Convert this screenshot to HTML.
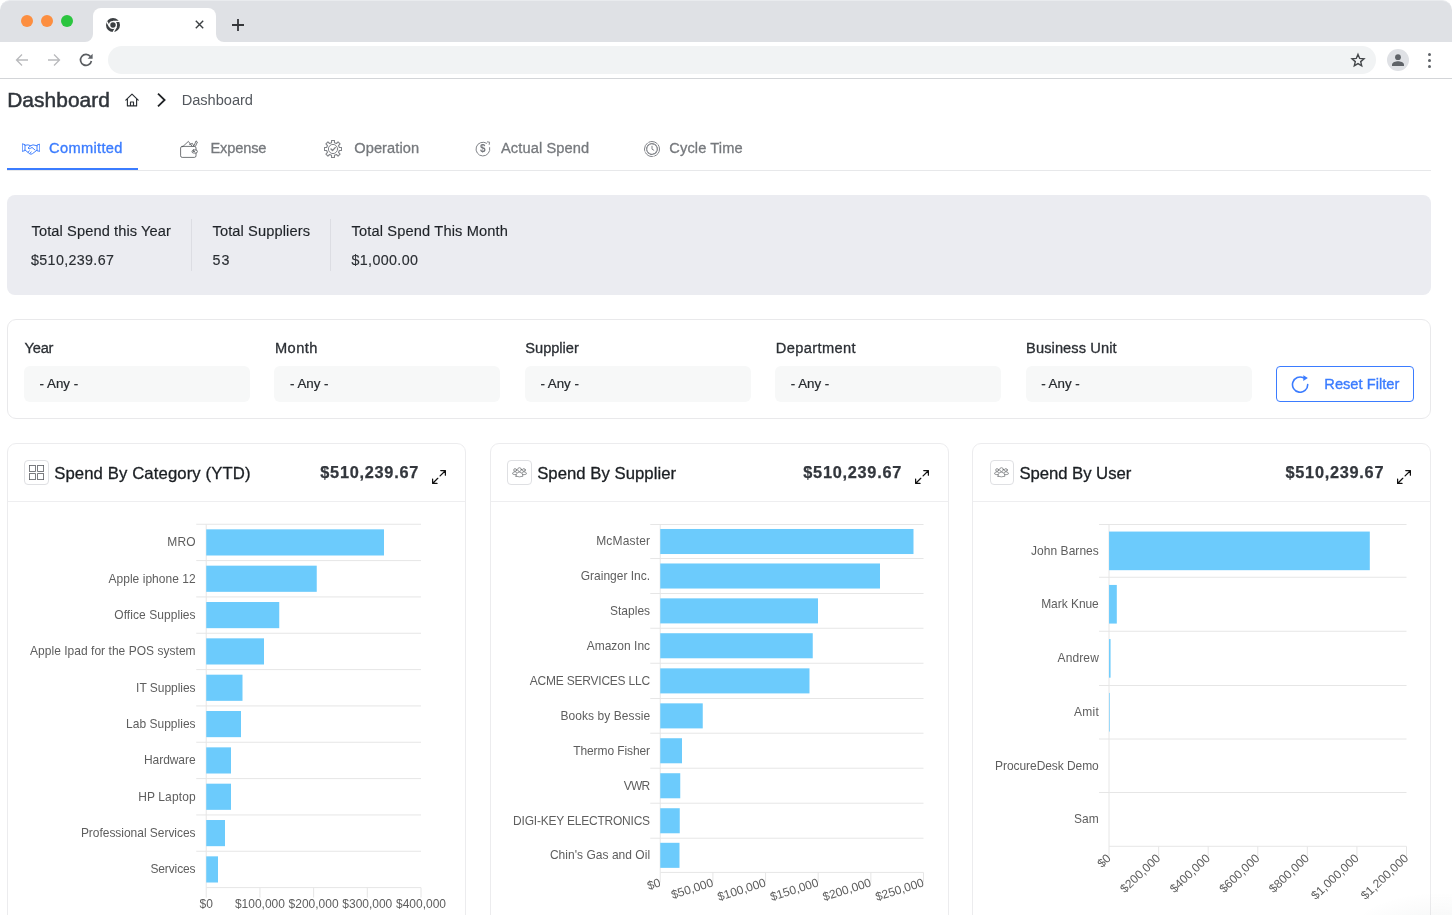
<!DOCTYPE html>
<html lang="en"><head><meta charset="utf-8"><title>Dashboard</title>
<style>
html,body{margin:0;padding:0}
body{width:1452px;height:915px;overflow:hidden;background:#fff;position:relative;font-family:"Liberation Sans",sans-serif;}
#app{position:absolute;left:0;top:0;width:1452px;height:915px;will-change:transform}
.b{position:absolute;box-sizing:border-box;display:block}
.t{position:absolute;white-space:nowrap;display:block}
svg text{font-family:"Liberation Sans",sans-serif}
</style></head><body>
<div id="app">
<!-- browser chrome -->
<div class="b" style="left:0px;top:0px;width:1452px;height:42px;background:#dfe1e5;border-radius:10px 10px 0 0;border-top:1px solid #e9ebee;"></div>
<div class="b" style="left:93px;top:8px;width:123px;height:34px;background:#fff;border-radius:8px 8px 0 0;"></div>
<svg class="b" style="left:85px;top:34px;" width="8" height="8" viewBox="0 0 8 8" fill="none"><path d="M8 0V8H0A8 8 0 0 0 8 0Z" fill="#fff"/></svg>
<svg class="b" style="left:216px;top:34px;" width="8" height="8" viewBox="0 0 8 8" fill="none"><path d="M0 0V8H8A8 8 0 0 1 0 0Z" fill="#fff"/></svg>
<div class="b" style="left:21px;top:15.1px;width:12px;height:12px;background:#fc8e40;border-radius:50%;"></div>
<div class="b" style="left:41px;top:15.1px;width:12px;height:12px;background:#fc8e40;border-radius:50%;"></div>
<div class="b" style="left:61px;top:15.1px;width:12px;height:12px;background:#2bc53f;border-radius:50%;"></div>
<svg class="b" style="left:106px;top:18px;" width="14" height="14" viewBox="0 0 14 14" fill="none"><circle cx="7" cy="7" r="7" fill="#3c4043"/><circle cx="7" cy="7" r="3.4" fill="#3c4043" stroke="#fff" stroke-width="1.35"/><path d="M7 3.3H13.4M3.7 8.9L.8 3.7M10.3 8.9L7.2 14.2" stroke="#fff" stroke-width="1.35"/></svg>
<svg class="b" style="left:195.2px;top:20px;" width="9" height="9" viewBox="0 0 9 9" fill="none"><path d="M.8.8L8.2 8.2M8.2.8L.8 8.2" stroke="#3c4043" stroke-width="1.4"/></svg>
<svg class="b" style="left:232px;top:19px;" width="12" height="12" viewBox="0 0 12 12" fill="none"><path d="M6 0V12M0 6H12" stroke="#35373a" stroke-width="1.8"/></svg>
<div class="b" style="left:0px;top:42px;width:1452px;height:37px;background:#fff;border-bottom:1px solid #d3d5d8;"></div>
<div class="b" style="left:108px;top:46px;width:1268px;height:28px;background:#f1f3f4;border-radius:14px;"></div>
<svg class="b" style="left:15px;top:53px;" width="14" height="14" viewBox="0 0 14 14" fill="none"><path d="M13 7H1.8M7 1.5L1.5 7L7 12.5" stroke="#b9babd" stroke-width="1.3"/></svg>
<svg class="b" style="left:47px;top:53px;" width="14" height="14" viewBox="0 0 14 14" fill="none"><path d="M1 7H12.2M7 1.5L12.5 7L7 12.5" stroke="#b9babd" stroke-width="1.3"/></svg>
<svg class="b" style="left:79px;top:53px;" width="14" height="14" viewBox="0 0 14 14" fill="none"><path d="M11.4 3.6A5.5 5.5 0 1 0 12.4 8" stroke="#5a5d61" stroke-width="1.7"/><path d="M13.6 .8V5.8H8.6Z" fill="#5f6368"/></svg>
<svg class="b" style="left:1350px;top:52px;" width="16" height="16" viewBox="0 0 16 16" fill="none"><path d="M8 2.4L9.7 6.4L14 6.8L10.7 9.6L11.7 13.8L8 11.6L4.3 13.8L5.3 9.6L2 6.8L6.3 6.4Z" stroke="#44474a" stroke-width="1.4" stroke-linejoin="miter"/></svg>
<div class="b" style="left:1387px;top:49px;width:22px;height:22px;background:#dfe1e5;border-radius:50%;"></div>
<svg class="b" style="left:1391px;top:53px;" width="14" height="14" viewBox="0 0 14 14" fill="none"><circle cx="7" cy="4.2" r="2.9" fill="#5f6368"/><path d="M1 13V11.6C1 9.3 4.8 8.2 7 8.2S13 9.3 13 11.6V13Z" fill="#5f6368"/></svg>
<div class="b" style="left:1428.2px;top:52.5px;width:3px;height:3px;background:#5f6368;border-radius:50%;"></div>
<div class="b" style="left:1428.2px;top:58.5px;width:3px;height:3px;background:#5f6368;border-radius:50%;"></div>
<div class="b" style="left:1428.2px;top:64.5px;width:3px;height:3px;background:#5f6368;border-radius:50%;"></div>
<!-- page header -->
<span class="t" style="left:7.20px;top:90.31px;font-size:20.9px;line-height:20.9px;color:#30353b;letter-spacing:0.069px;-webkit-text-stroke:0.5px #30353b;">Dashboard</span>
<svg class="b" style="left:124px;top:92.3px;" width="16" height="16" viewBox="0 0 16 16" fill="none"><path d="M1.8 8.2L8 2.2L14.2 8.2M3.4 6.9V13.9H12.6V6.9M6.5 13.9V10H9.5V13.9" stroke="#2b2f33" stroke-width="1.15" stroke-linejoin="round" stroke-linecap="round"/></svg>
<svg class="b" style="left:155px;top:92px;" width="13" height="17" viewBox="0 0 13 17" fill="none"><path d="M3 1.6L9.6 8L3 14.4" stroke="#1f2225" stroke-width="1.8"/></svg>
<span class="t" style="left:181.70px;top:93.42px;font-size:14.63px;line-height:14.63px;color:#54585e;letter-spacing:-0.034px;">Dashboard</span>
<!-- tabs -->
<div class="b" style="left:7px;top:170px;width:1424px;height:1px;background:#e7e8ea;"></div>
<div class="b" style="left:7px;top:168px;width:131px;height:2px;background:#3b7cff;"></div>
<span class="t" style="left:49.00px;top:140.62px;font-size:14.63px;line-height:14.63px;color:#3b7cff;letter-spacing:0.346px;-webkit-text-stroke:0.35px #3b7cff;">Committed</span>
<span class="t" style="left:210.50px;top:140.62px;font-size:14.63px;line-height:14.63px;color:#76797d;letter-spacing:-0.156px;-webkit-text-stroke:0.3px #76797d;">Expense</span>
<span class="t" style="left:354.20px;top:140.62px;font-size:14.63px;line-height:14.63px;color:#76797d;letter-spacing:0.094px;-webkit-text-stroke:0.3px #76797d;">Operation</span>
<span class="t" style="left:501.00px;top:140.62px;font-size:14.63px;line-height:14.63px;color:#76797d;letter-spacing:0.106px;-webkit-text-stroke:0.3px #76797d;">Actual Spend</span>
<span class="t" style="left:669.30px;top:140.62px;font-size:14.63px;line-height:14.63px;color:#76797d;letter-spacing:0.106px;-webkit-text-stroke:0.3px #76797d;">Cycle Time</span>
<svg class="b" style="left:22px;top:142.6px;" width="18" height="13" viewBox="0 0 18 13" fill="none"><g transform="scale(1 .92)" stroke="#3b7cff" stroke-width="1" stroke-linejoin="round" stroke-linecap="round"><path d="M.6 1L3 1.8V8.2L.6 9Z"/><path d="M17.4 1.4L15 2.2V8.4L17.4 9Z"/><path d="M3 2.6L6 2L8.6 3L11 2L15 3"/><path d="M3 7.6L7.6 11.6Q9 12.8 10.4 11.6L15 7.8"/><path d="M8.6 3L6 5.5Q7 7 8.5 5.8L10 4.8L13 7.6"/><path d="M6 10L7.4 8.6M7.8 11.2L9.2 9.8"/></g></svg>
<svg class="b" style="left:180px;top:140px;" width="18" height="18" viewBox="0 0 18 18" fill="none"><g stroke="#46494e" stroke-width=".75" stroke-linejoin="round" stroke-linecap="round"><rect x=".6" y="6.4" width="15.4" height="11" rx="1.6"/><path d="M3 6.4L8.4 1.4L12 6.2M9.6 4.4L12.4 3.4L14 6.4"/><path d="M14.2 5.4L16 .9L17.4 2L15.6 6"/><rect x="12" y="10" width="5.4" height="3" rx="1.5" fill="#fff"/><path d="M13.2 11.5H14.6"/></g></svg>
<svg class="b" style="left:324px;top:140px;" width="18" height="18" viewBox="0 0 18 18" fill="none"><g stroke="#808388" stroke-width="1" stroke-linejoin="round" stroke-linecap="round"><path d="M7.57 0.42L10.43 0.42L10.47 2.67L12.44 3.48L14.06 1.92L16.08 3.94L14.52 5.56L15.33 7.53L17.58 7.57L17.58 10.43L15.33 10.47L14.52 12.44L16.08 14.06L14.06 16.08L12.44 14.52L10.47 15.33L10.43 17.58L7.57 17.58L7.53 15.33L5.56 14.52L3.94 16.08L1.92 14.06L3.48 12.44L2.67 10.47L0.42 10.43L0.42 7.57L2.67 7.53L3.48 5.56L1.92 3.94L3.94 1.92L5.56 3.48L7.53 2.67Z" stroke-width="1.1"/><circle cx="9" cy="9" r="4.6"/><path d="M7 9.1L8.5 10.6L11.2 7.6" stroke-width="1.4"/></g></svg>
<svg class="b" style="left:475px;top:141px;" width="16" height="16" viewBox="0 0 16 16" fill="none"><g stroke="#808388" stroke-width="1" stroke-linecap="round"><path d="M11.6 2.2A6.9 6.9 0 1 0 14.7 6.6"/><path d="M12.4 .9L14.6 1.2L14.2 3.4" stroke-linejoin="round"/></g><text x="7.8" y="11.4" font-size="10" font-weight="700" text-anchor="middle" fill="#75787d" stroke="none">$</text></svg>
<svg class="b" style="left:644px;top:141px;" width="16" height="16" viewBox="0 0 16 16" fill="none"><g stroke="#808388" stroke-width="1" stroke-linecap="round"><circle cx="8" cy="8" r="7.5" stroke-dasharray="9 1.6"/><circle cx="8" cy="8" r="5.3" stroke-width="1.3" stroke-dasharray="1.6 1.17"/><path d="M8 5.2V8.2L9.8 9.2"/></g></svg>
<!-- stats -->
<div class="b" style="left:7px;top:195px;width:1424px;height:100px;background:#ebecf1;border-radius:8px;"></div>
<span class="t" style="left:31.50px;top:223.62px;font-size:14.63px;line-height:14.63px;color:#1f2328;letter-spacing:0.102px;-webkit-text-stroke:0.15px #1f2328;">Total Spend this Year</span>
<span class="t" style="left:31.00px;top:252.91px;font-size:14.28px;line-height:14.28px;color:#2a2e33;letter-spacing:0.359px;-webkit-text-stroke:0.15px #2a2e33;">$510,239.67</span>
<div class="b" style="left:191px;top:219px;width:1px;height:52px;background:#dcdde3;"></div>
<span class="t" style="left:212.50px;top:223.62px;font-size:14.63px;line-height:14.63px;color:#1f2328;letter-spacing:0.110px;-webkit-text-stroke:0.15px #1f2328;">Total Suppliers</span>
<span class="t" style="left:212.50px;top:252.91px;font-size:14.28px;line-height:14.28px;color:#2a2e33;letter-spacing:1.116px;-webkit-text-stroke:0.15px #2a2e33;">53</span>
<div class="b" style="left:330px;top:219px;width:1px;height:52px;background:#dcdde3;"></div>
<span class="t" style="left:351.50px;top:223.62px;font-size:14.63px;line-height:14.63px;color:#1f2328;letter-spacing:0.146px;-webkit-text-stroke:0.15px #1f2328;">Total Spend This Month</span>
<span class="t" style="left:351.50px;top:252.91px;font-size:14.28px;line-height:14.28px;color:#2a2e33;letter-spacing:0.371px;-webkit-text-stroke:0.15px #2a2e33;">$1,000.00</span>
<!-- filters -->
<div class="b" style="left:7px;top:319px;width:1424px;height:100px;background:#fff;border:1px solid #e9e9eb;border-radius:9px;"></div>
<span class="t" style="left:24.50px;top:340.62px;font-size:14.63px;line-height:14.63px;color:#2b2f34;letter-spacing:-0.187px;-webkit-text-stroke:0.3px #2b2f34;">Year</span>
<div class="b" style="left:24.0px;top:366px;width:226px;height:36px;background:#f7f8f8;border-radius:6px;"></div>
<span class="t" style="left:39.60px;top:377.32px;font-size:13.33px;line-height:13.33px;color:#25292d;-webkit-text-stroke:0.2px #25292d;">- Any -</span>
<span class="t" style="left:274.90px;top:340.62px;font-size:14.63px;line-height:14.63px;color:#2b2f34;letter-spacing:0.460px;-webkit-text-stroke:0.3px #2b2f34;">Month</span>
<div class="b" style="left:274.4px;top:366px;width:226px;height:36px;background:#f7f8f8;border-radius:6px;"></div>
<span class="t" style="left:290.00px;top:377.32px;font-size:13.33px;line-height:13.33px;color:#25292d;-webkit-text-stroke:0.2px #25292d;">- Any -</span>
<span class="t" style="left:525.30px;top:340.62px;font-size:14.63px;line-height:14.63px;color:#2b2f34;letter-spacing:-0.025px;-webkit-text-stroke:0.3px #2b2f34;">Supplier</span>
<div class="b" style="left:524.8px;top:366px;width:226px;height:36px;background:#f7f8f8;border-radius:6px;"></div>
<span class="t" style="left:540.40px;top:377.32px;font-size:13.33px;line-height:13.33px;color:#25292d;-webkit-text-stroke:0.2px #25292d;">- Any -</span>
<span class="t" style="left:775.70px;top:340.62px;font-size:14.63px;line-height:14.63px;color:#2b2f34;letter-spacing:0.396px;-webkit-text-stroke:0.3px #2b2f34;">Department</span>
<div class="b" style="left:775.2px;top:366px;width:226px;height:36px;background:#f7f8f8;border-radius:6px;"></div>
<span class="t" style="left:790.80px;top:377.32px;font-size:13.33px;line-height:13.33px;color:#25292d;-webkit-text-stroke:0.2px #25292d;">- Any -</span>
<span class="t" style="left:1026.10px;top:340.62px;font-size:14.63px;line-height:14.63px;color:#2b2f34;letter-spacing:0.088px;-webkit-text-stroke:0.3px #2b2f34;">Business Unit</span>
<div class="b" style="left:1025.6px;top:366px;width:226px;height:36px;background:#f7f8f8;border-radius:6px;"></div>
<span class="t" style="left:1041.20px;top:377.32px;font-size:13.33px;line-height:13.33px;color:#25292d;-webkit-text-stroke:0.2px #25292d;">- Any -</span>
<div class="b" style="left:1276px;top:366px;width:138px;height:36px;border:1px solid #3b7cff;border-radius:4px;background:#fff;"></div>
<svg class="b" style="left:1291px;top:375px;" width="18" height="18" viewBox="0 0 18 18" fill="none"><path d="M16.7 9.6A7.6 7.6 0 1 1 12.6 2.9" stroke="#3b7cff" stroke-width="1.6" stroke-linecap="round"/><path d="M12.3 .2L16.9 2.9L12.3 5.9Z" fill="#3b7cff"/></svg>
<span class="t" style="left:1324.30px;top:376.92px;font-size:14.63px;line-height:14.63px;color:#3b7cff;letter-spacing:0.019px;-webkit-text-stroke:0.35px #3b7cff;">Reset Filter</span>
<!-- cards -->
<div class="b" style="left:7px;top:443px;width:458.8px;height:500px;background:#fff;border:1px solid #ececee;border-radius:9px;"></div>
<div class="b" style="left:8px;top:501px;width:456.8px;height:1px;background:#eeeef0;"></div>
<div class="b" style="left:24.4px;top:460.3px;width:24.3px;height:24.3px;border:1px solid #dfe0e3;border-radius:4px;background:#fff;"></div>
<svg class="b" style="left:29px;top:465.2px;" width="15" height="15" viewBox="0 0 15 15" fill="none"><g stroke="#5a5d62" stroke-width=".8"><rect x=".4" y=".4" width="6" height="6"/><rect x="8.6" y=".4" width="6" height="6"/><rect x=".4" y="8.6" width="6" height="6"/><rect x="8.6" y="8.6" width="6" height="6"/></g></svg>
<span class="t" style="left:54.20px;top:466.35px;font-size:16.72px;line-height:16.72px;color:#1b1f23;letter-spacing:0.104px;-webkit-text-stroke:0.3px #1b1f23;">Spend By Category (YTD)</span>
<span class="t" style="left:320.30px;top:464.19px;font-size:16.32px;line-height:16.32px;color:#33373d;letter-spacing:0.724px;font-weight:700;-webkit-text-stroke:0.25px #33373d;">$510,239.67</span>
<svg class="b" style="left:431.7px;top:470px;" width="14" height="14" viewBox="0 0 14 14" fill="none"><g stroke="#111" stroke-width="1.25" stroke-linecap="round" stroke-linejoin="round"><path d="M8.1 5.9L13.3.7M8.8.6H13.4V5.2"/><path d="M5.8 8.3L.8 13.3M.6 9V13.4H5"/></g></svg>
<svg class="b" style="left:8.00px;top:503px;overflow:hidden" width="456.80" height="412" viewBox="8.00 503 456.80 412" fill="none"><g stroke="#e6e6e6" stroke-width="1" shape-rendering="auto"><path d="M196.25 524.25H421.00"/><path d="M196.25 560.59H421.00"/><path d="M196.25 596.92H421.00"/><path d="M196.25 633.25H421.00"/><path d="M196.25 669.59H421.00"/><path d="M196.25 705.92H421.00"/><path d="M196.25 742.26H421.00"/><path d="M196.25 778.60H421.00"/><path d="M196.25 814.93H421.00"/><path d="M196.25 851.26H421.00"/><path d="M206.25 887.60H421.00"/><path d="M206.25 524.25V897.60"/><path d="M259.94 887.60V897.60"/><path d="M313.62 887.60V897.60"/><path d="M367.31 887.60V897.60"/><path d="M421.00 887.60V897.60"/></g><g fill="#6ccbfc"><rect x="206.25" y="529.34" width="177.75" height="26.16"/><rect x="206.25" y="565.67" width="110.50" height="26.16"/><rect x="206.25" y="602.01" width="73.00" height="26.16"/><rect x="206.25" y="638.34" width="57.75" height="26.16"/><rect x="206.25" y="674.68" width="36.25" height="26.16"/><rect x="206.25" y="711.01" width="34.75" height="26.16"/><rect x="206.25" y="747.35" width="24.75" height="26.16"/><rect x="206.25" y="783.68" width="24.75" height="26.16"/><rect x="206.25" y="820.02" width="18.75" height="26.16"/><rect x="206.25" y="856.35" width="11.75" height="26.16"/></g><text x="195.60" y="546.32" font-size="12" fill="#5e5e5e" text-anchor="end" textLength="28.30" lengthAdjust="spacing">MRO</text><text x="195.60" y="582.65" font-size="12" fill="#5e5e5e" text-anchor="end" textLength="87.10" lengthAdjust="spacing">Apple iphone 12</text><text x="195.60" y="618.99" font-size="12" fill="#5e5e5e" text-anchor="end" textLength="81.30" lengthAdjust="spacing">Office Supplies</text><text x="195.60" y="655.32" font-size="12" fill="#5e5e5e" text-anchor="end" textLength="165.60" lengthAdjust="spacing">Apple Ipad for the POS system</text><text x="195.60" y="691.66" font-size="12" fill="#5e5e5e" text-anchor="end" textLength="59.50" lengthAdjust="spacing">IT Supplies</text><text x="195.60" y="727.99" font-size="12" fill="#5e5e5e" text-anchor="end" textLength="69.60" lengthAdjust="spacing">Lab Supplies</text><text x="195.60" y="764.33" font-size="12" fill="#5e5e5e" text-anchor="end" textLength="51.60" lengthAdjust="spacing">Hardware</text><text x="195.60" y="800.66" font-size="12" fill="#5e5e5e" text-anchor="end" textLength="57.40" lengthAdjust="spacing">HP Laptop</text><text x="195.60" y="837.00" font-size="12" fill="#5e5e5e" text-anchor="end" textLength="114.70" lengthAdjust="spacing">Professional Services</text><text x="195.60" y="873.33" font-size="12" fill="#5e5e5e" text-anchor="end" textLength="45.20" lengthAdjust="spacing">Services</text><text x="206.25" y="908.40" font-size="12" fill="#5e5e5e" text-anchor="middle">$0</text><text x="259.94" y="908.40" font-size="12" fill="#5e5e5e" text-anchor="middle">$100,000</text><text x="313.62" y="908.40" font-size="12" fill="#5e5e5e" text-anchor="middle">$200,000</text><text x="367.31" y="908.40" font-size="12" fill="#5e5e5e" text-anchor="middle">$300,000</text><text x="421.00" y="908.40" font-size="12" fill="#5e5e5e" text-anchor="middle">$400,000</text></svg>
<div class="b" style="left:490px;top:443px;width:458.8px;height:500px;background:#fff;border:1px solid #ececee;border-radius:9px;"></div>
<div class="b" style="left:491px;top:501px;width:456.8px;height:1px;background:#eeeef0;"></div>
<div class="b" style="left:507.4px;top:460.3px;width:24.3px;height:24.3px;border:1px solid #dfe0e3;border-radius:4px;background:#fff;"></div>
<svg class="b" style="left:512px;top:467px;" width="15" height="11" viewBox="0 0 15 11" fill="none"><g stroke="#44474b" stroke-width=".55" stroke-linecap="round" stroke-linejoin="round"><circle cx="7.5" cy="2.6" r="1.9"/><path d="M4 9.2Q4 5.2 7.5 5.2T11 9.2Q7.5 10.6 4 9.2Z"/><circle cx="3.1" cy="3" r="1.4"/><path d="M3.9 7.6Q1.6 8 .5 6.9Q.7 4.6 3.1 4.8Q4.3 4.9 4.8 5.6"/><circle cx="11.9" cy="3" r="1.4"/><path d="M11.1 7.6Q13.4 8 14.5 6.9Q14.3 4.6 11.9 4.8Q10.7 4.9 10.2 5.6"/></g></svg>
<span class="t" style="left:537.20px;top:466.35px;font-size:16.72px;line-height:16.72px;color:#1b1f23;letter-spacing:0.032px;-webkit-text-stroke:0.3px #1b1f23;">Spend By Supplier</span>
<span class="t" style="left:803.30px;top:464.19px;font-size:16.32px;line-height:16.32px;color:#33373d;letter-spacing:0.724px;font-weight:700;-webkit-text-stroke:0.25px #33373d;">$510,239.67</span>
<svg class="b" style="left:914.7px;top:470px;" width="14" height="14" viewBox="0 0 14 14" fill="none"><g stroke="#111" stroke-width="1.25" stroke-linecap="round" stroke-linejoin="round"><path d="M8.1 5.9L13.3.7M8.8.6H13.4V5.2"/><path d="M5.8 8.3L.8 13.3M.6 9V13.4H5"/></g></svg>
<svg class="b" style="left:491.00px;top:503px;overflow:hidden" width="456.80" height="412" viewBox="491.00 503 456.80 412" fill="none"><g stroke="#e6e6e6" stroke-width="1" shape-rendering="auto"><path d="M650.25 524.50H923.50"/><path d="M650.25 558.50H923.50"/><path d="M650.25 593.50H923.50"/><path d="M650.25 628.25H923.50"/><path d="M650.25 663.25H923.50"/><path d="M650.25 698.50H923.50"/><path d="M650.25 733.25H923.50"/><path d="M650.25 768.25H923.50"/><path d="M650.25 803.25H923.50"/><path d="M650.25 838.25H923.50"/><path d="M660.25 872.40H923.50"/><path d="M660.25 524.50V882.40"/><path d="M712.90 872.40V882.40"/><path d="M765.55 872.40V882.40"/><path d="M818.20 872.40V882.40"/><path d="M870.85 872.40V882.40"/><path d="M923.50 872.40V882.40"/></g><g fill="#6ccbfc"><rect x="660.25" y="528.98" width="253.25" height="25.05"/><rect x="660.25" y="563.48" width="219.75" height="25.05"/><rect x="660.25" y="598.35" width="157.75" height="25.05"/><rect x="660.25" y="633.23" width="152.50" height="25.05"/><rect x="660.25" y="668.35" width="149.25" height="25.05"/><rect x="660.25" y="703.35" width="42.50" height="25.05"/><rect x="660.25" y="738.23" width="21.75" height="25.05"/><rect x="660.25" y="773.23" width="20.00" height="25.05"/><rect x="660.25" y="808.23" width="19.50" height="25.05"/><rect x="660.25" y="842.80" width="19.25" height="25.05"/></g><text x="650.10" y="545.40" font-size="12" fill="#5e5e5e" text-anchor="end" textLength="53.90" lengthAdjust="spacing">McMaster</text><text x="650.10" y="579.90" font-size="12" fill="#5e5e5e" text-anchor="end" textLength="69.30" lengthAdjust="spacing">Grainger Inc.</text><text x="650.10" y="614.77" font-size="12" fill="#5e5e5e" text-anchor="end" textLength="40.10" lengthAdjust="spacing">Staples</text><text x="650.10" y="649.65" font-size="12" fill="#5e5e5e" text-anchor="end" textLength="63.40" lengthAdjust="spacing">Amazon Inc</text><text x="650.10" y="684.77" font-size="12" fill="#5e5e5e" text-anchor="end" textLength="120.30" lengthAdjust="spacing">ACME SERVICES LLC</text><text x="650.10" y="719.77" font-size="12" fill="#5e5e5e" text-anchor="end" textLength="89.60" lengthAdjust="spacing">Books by Bessie</text><text x="650.10" y="754.65" font-size="12" fill="#5e5e5e" text-anchor="end" textLength="76.90" lengthAdjust="spacing">Thermo Fisher</text><text x="650.10" y="789.65" font-size="12" fill="#5e5e5e" text-anchor="end" textLength="26.40" lengthAdjust="spacing">VWR</text><text x="650.10" y="824.65" font-size="12" fill="#5e5e5e" text-anchor="end" textLength="137.00" lengthAdjust="spacing">DIGI-KEY ELECTRONICS</text><text x="650.10" y="859.23" font-size="12" fill="#5e5e5e" text-anchor="end" textLength="100.20" lengthAdjust="spacing">Chin&#x27;s Gas and Oil</text><text x="660.25" y="886.20" font-size="12" fill="#5e5e5e" text-anchor="end" transform="rotate(-17.5 660.25 882.40)">$0</text><text x="712.90" y="886.20" font-size="12" fill="#5e5e5e" text-anchor="end" transform="rotate(-17.5 712.90 882.40)">$50,000</text><text x="765.55" y="886.20" font-size="12" fill="#5e5e5e" text-anchor="end" transform="rotate(-17.5 765.55 882.40)">$100,000</text><text x="818.20" y="886.20" font-size="12" fill="#5e5e5e" text-anchor="end" transform="rotate(-17.5 818.20 882.40)">$150,000</text><text x="870.85" y="886.20" font-size="12" fill="#5e5e5e" text-anchor="end" transform="rotate(-17.5 870.85 882.40)">$200,000</text><text x="923.50" y="886.20" font-size="12" fill="#5e5e5e" text-anchor="end" transform="rotate(-17.5 923.50 882.40)">$250,000</text></svg>
<div class="b" style="left:972.2px;top:443px;width:458.8px;height:500px;background:#fff;border:1px solid #ececee;border-radius:9px;"></div>
<div class="b" style="left:973.2px;top:501px;width:456.8px;height:1px;background:#eeeef0;"></div>
<div class="b" style="left:989.6px;top:460.3px;width:24.3px;height:24.3px;border:1px solid #dfe0e3;border-radius:4px;background:#fff;"></div>
<svg class="b" style="left:994.2px;top:467px;" width="15" height="11" viewBox="0 0 15 11" fill="none"><g stroke="#44474b" stroke-width=".55" stroke-linecap="round" stroke-linejoin="round"><circle cx="7.5" cy="2.6" r="1.9"/><path d="M4 9.2Q4 5.2 7.5 5.2T11 9.2Q7.5 10.6 4 9.2Z"/><circle cx="3.1" cy="3" r="1.4"/><path d="M3.9 7.6Q1.6 8 .5 6.9Q.7 4.6 3.1 4.8Q4.3 4.9 4.8 5.6"/><circle cx="11.9" cy="3" r="1.4"/><path d="M11.1 7.6Q13.4 8 14.5 6.9Q14.3 4.6 11.9 4.8Q10.7 4.9 10.2 5.6"/></g></svg>
<span class="t" style="left:1019.40px;top:466.35px;font-size:16.72px;line-height:16.72px;color:#1b1f23;letter-spacing:-0.038px;-webkit-text-stroke:0.3px #1b1f23;">Spend By User</span>
<span class="t" style="left:1285.50px;top:464.19px;font-size:16.32px;line-height:16.32px;color:#33373d;letter-spacing:0.724px;font-weight:700;-webkit-text-stroke:0.25px #33373d;">$510,239.67</span>
<svg class="b" style="left:1396.9px;top:470px;" width="14" height="14" viewBox="0 0 14 14" fill="none"><g stroke="#111" stroke-width="1.25" stroke-linecap="round" stroke-linejoin="round"><path d="M8.1 5.9L13.3.7M8.8.6H13.4V5.2"/><path d="M5.8 8.3L.8 13.3M.6 9V13.4H5"/></g></svg>
<svg class="b" style="left:973.20px;top:503px;overflow:hidden" width="456.80" height="412" viewBox="973.20 503 456.80 412" fill="none"><g stroke="#e6e6e6" stroke-width="1" shape-rendering="auto"><path d="M1099.25 524.50H1406.70"/><path d="M1099.25 577.25H1406.70"/><path d="M1099.25 631.25H1406.70"/><path d="M1099.25 685.50H1406.70"/><path d="M1099.25 739.00H1406.70"/><path d="M1099.25 792.50H1406.70"/><path d="M1109.25 846.30H1406.70"/><path d="M1109.25 524.50V856.40"/><path d="M1158.83 846.40V856.40"/><path d="M1208.40 846.40V856.40"/><path d="M1257.97 846.40V856.40"/><path d="M1307.55 846.40V856.40"/><path d="M1357.12 846.40V856.40"/><path d="M1406.70 846.40V856.40"/></g><g fill="#6ccbfc"><rect x="1109.25" y="531.56" width="260.75" height="38.63"/><rect x="1109.25" y="584.94" width="7.75" height="38.63"/><rect x="1109.25" y="639.06" width="1.50" height="38.63"/><rect x="1109.25" y="692.94" width="0.65" height="38.63"/></g><text x="1099.00" y="554.77" font-size="12" fill="#5e5e5e" text-anchor="end" textLength="67.70" lengthAdjust="spacing">John Barnes</text><text x="1099.00" y="608.15" font-size="12" fill="#5e5e5e" text-anchor="end" textLength="57.60" lengthAdjust="spacing">Mark Knue</text><text x="1099.00" y="662.27" font-size="12" fill="#5e5e5e" text-anchor="end" textLength="41.20" lengthAdjust="spacing">Andrew</text><text x="1099.00" y="716.15" font-size="12" fill="#5e5e5e" text-anchor="end" textLength="24.70" lengthAdjust="spacing">Amit</text><text x="1099.00" y="769.65" font-size="12" fill="#5e5e5e" text-anchor="end" textLength="103.70" lengthAdjust="spacing">ProcureDesk Demo</text><text x="1099.00" y="823.30" font-size="12" fill="#5e5e5e" text-anchor="end" textLength="24.70" lengthAdjust="spacing">Sam</text><text x="1109.25" y="860.20" font-size="12" fill="#5e5e5e" text-anchor="end" transform="rotate(-43.3 1109.25 856.40)">$0</text><text x="1158.83" y="860.20" font-size="12" fill="#5e5e5e" text-anchor="end" transform="rotate(-43.3 1158.83 856.40)">$200,000</text><text x="1208.40" y="860.20" font-size="12" fill="#5e5e5e" text-anchor="end" transform="rotate(-43.3 1208.40 856.40)">$400,000</text><text x="1257.97" y="860.20" font-size="12" fill="#5e5e5e" text-anchor="end" transform="rotate(-43.3 1257.97 856.40)">$600,000</text><text x="1307.55" y="860.20" font-size="12" fill="#5e5e5e" text-anchor="end" transform="rotate(-43.3 1307.55 856.40)">$800,000</text><text x="1357.12" y="860.20" font-size="12" fill="#5e5e5e" text-anchor="end" transform="rotate(-43.3 1357.12 856.40)">$1,000,000</text><text x="1406.70" y="860.20" font-size="12" fill="#5e5e5e" text-anchor="end" transform="rotate(-43.3 1406.70 856.40)">$1,200,000</text></svg>
<div class="b" style="left:1340px;top:880px;width:112px;height:35px;background:radial-gradient(ellipse 90px 40px at 100px 52px, rgba(30,50,50,.055), rgba(30,50,50,.02) 60%, rgba(30,50,50,0) 100%);"></div>
</div>
</body></html>
